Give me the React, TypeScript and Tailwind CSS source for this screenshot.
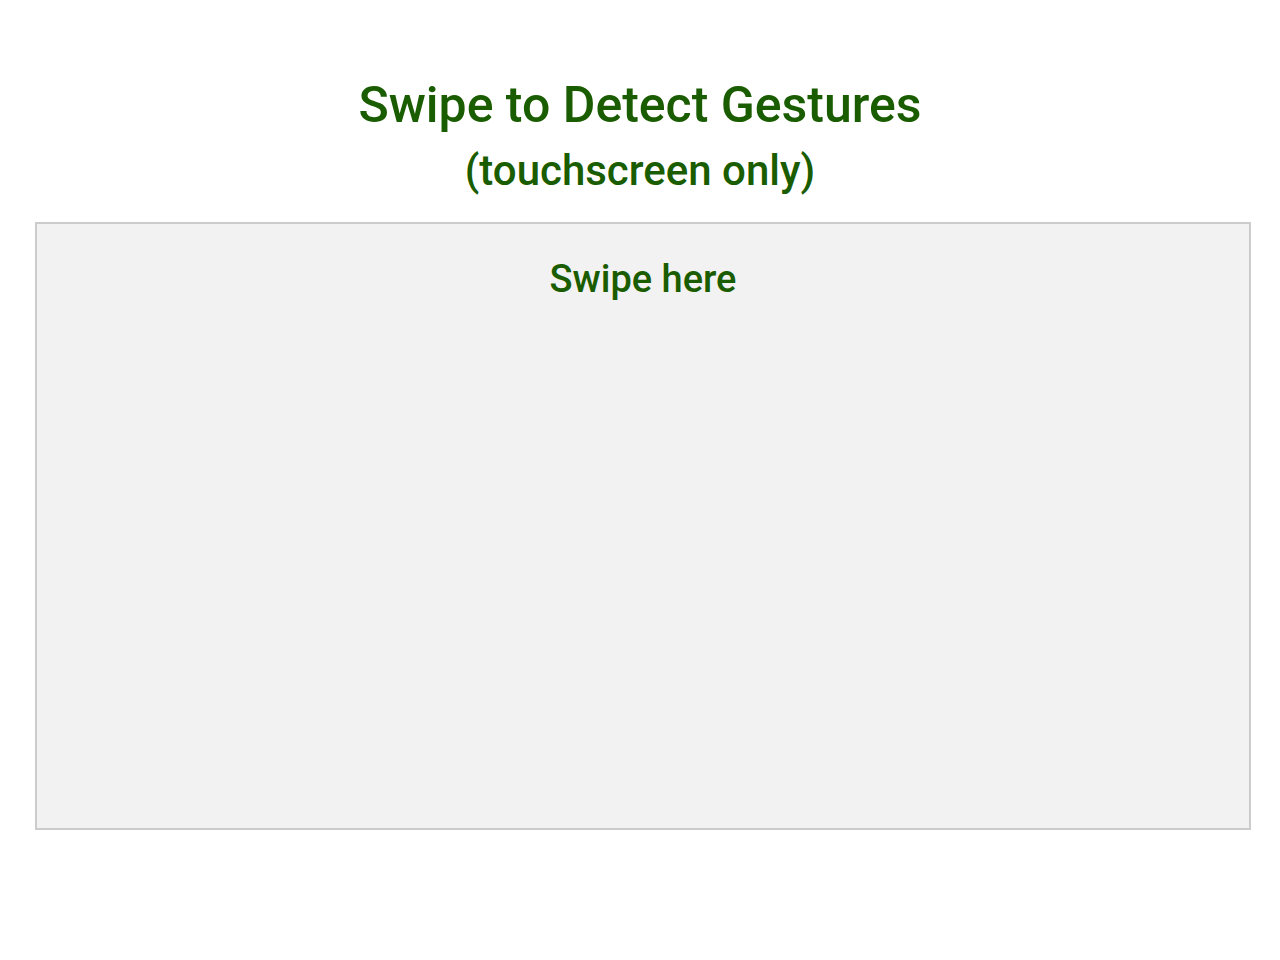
export default function App() {
  return (
    <div className="min-h-screen bg-white font-['Roboto',sans-serif] text-[#1a5c00]">
      <div className="pt-[74px] text-center">
        <h1 className="text-[50px] leading-[62px] font-medium">Swipe to Detect Gestures</h1>
        <h2 className="mt-[10px] text-[42px] leading-[50px] font-medium">(touchscreen only)</h2>
      </div>
      <div className="ml-[35px] mt-[26px] w-[1216px] h-[608px] border-2 border-[#cccccc] bg-[#f2f2f2]">
        <p className="pt-[36px] text-center text-[38px] leading-[38px] font-medium">Swipe here</p>
      </div>
    </div>
  );
}
